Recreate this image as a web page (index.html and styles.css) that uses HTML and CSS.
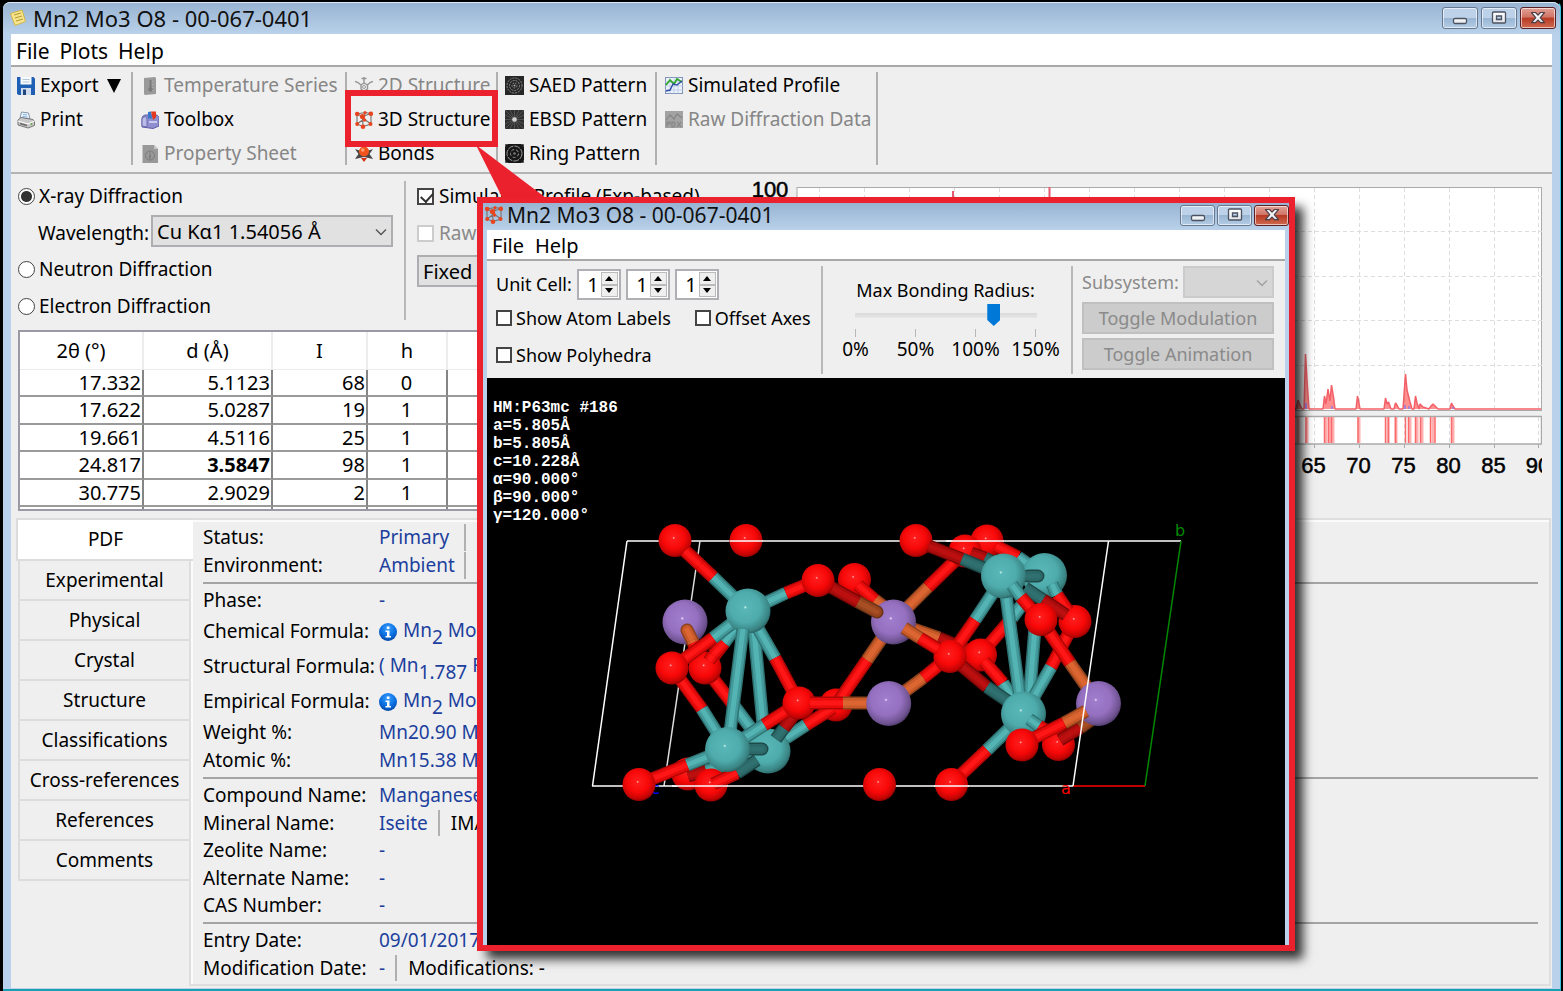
FILE: index.html
```html
<!DOCTYPE html>
<html lang="en">
<head>
<meta charset="utf-8">
<title>Mn2 Mo3 O8 - 00-067-0401</title>
<link rel="stylesheet" href="styles.css">
</head>
<body>
<svg class="defs" aria-hidden="true">
  <defs>
    <linearGradient id="capBlue" x1="0" y1="0" x2="0" y2="1"><stop offset="0" stop-color="#fff"/><stop offset="1" stop-color="#dfe3ea"/></linearGradient>
    <radialGradient id="gO" cx=".46" cy=".42" r=".6"><stop offset="0" stop-color="#ffc0c0"/><stop offset=".07" stop-color="#ff1c1c"/><stop offset=".55" stop-color="#f80808"/><stop offset=".85" stop-color="#c40404"/><stop offset="1" stop-color="#800"/></radialGradient>
    <radialGradient id="gMo" cx=".44" cy=".42" r=".62"><stop offset="0" stop-color="#d8f4f2"/><stop offset=".06" stop-color="#58b6b6"/><stop offset=".55" stop-color="#4eacac"/><stop offset=".85" stop-color="#3a8484"/><stop offset="1" stop-color="#245858"/></radialGradient>
    <radialGradient id="gMn" cx=".44" cy=".42" r=".62"><stop offset="0" stop-color="#f2e8ff"/><stop offset=".06" stop-color="#a07ccc"/><stop offset=".55" stop-color="#9570c0"/><stop offset=".85" stop-color="#6e5290"/><stop offset="1" stop-color="#463460"/></radialGradient>
    <radialGradient id="gInfo" cx=".5" cy=".3" r=".7"><stop offset="0" stop-color="#3aa0ff"/><stop offset=".6" stop-color="#0a6fe0"/><stop offset="1" stop-color="#0648a8"/></radialGradient>
    <symbol id="i-min" viewBox="0 0 16 14"><rect x="1.5" y="7.500" width="13" height="5" rx="1.500" fill="url(#capBlue)" stroke="#4c5260" stroke-width="1.300"/></symbol>
    <symbol id="i-max" viewBox="0 0 16 14"><path fill-rule="evenodd" d="M2.500 1h11a1 1 0 0 1 1 1v9a1 1 0 0 1-1 1h-11a1 1 0 0 1-1-1V2a1 1 0 0 1 1-1zM5.500 5v3.500h5V5z" fill="url(#capBlue)" stroke="#4c5260" stroke-width="1.300"/></symbol>
    <symbol id="i-close" viewBox="0 0 16 14"><path d="M1.500 1.500h4L8 4.200l2.500-2.700h4L10.300 6.700l4.200 5h-4L8 9.100l-2.500 2.600h-4l4.200-5z" fill="url(#capBlue)" stroke="#4c4048" stroke-width="1.200" stroke-linejoin="round"/></symbol>
    <symbol id="i-note" viewBox="0 0 18 18"><path d="M1.500 4.500 13 1l1 3 2.500 8.500L6 16.500z" fill="#f6e58a" stroke="#d2b44a" stroke-width="1"/><path d="M5 6l7-2M6 9l7-2M7 12l7-2" stroke="#b79a3c" stroke-width="1.200"/></symbol>
    <symbol id="i-save" viewBox="0 0 18 18"><path d="M0 0h16.500L18 1.500V18H1.500L0 16.500z" fill="#1f5fb4"/><rect x="3.500" y="0" width="11" height="7.500" fill="#f6f9fd"/><path d="M5.500 2.500h7M5.500 5h7" stroke="#b8c6dc"/><rect x="4" y="11" width="10" height="7" fill="#cfdced"/><rect x="6" y="12.500" width="3" height="5.500" fill="#23467c"/></symbol>
    <symbol id="i-print" viewBox="0 0 18 18"><path d="M3 7 4.500 1l7 1 1.500 6z" fill="#eef6ff" stroke="#8696a8"/><path d="M6 3.500l4 .5M5.500 5.500l5 .7" stroke="#79aee0"/><path d="M1 9l3-2.500 12 2 1.500 2v4L11 17 1 14z" fill="#c9c9c9" stroke="#777"/><path d="M1 10l10 3 6.500-3" fill="none" stroke="#fff"/><path d="M3 12.500l7 2" stroke="#666" stroke-width="1.500"/><circle cx="14.500" cy="13" r="1" fill="#5da83b"/></symbol>
    <symbol id="i-temp" viewBox="0 0 18 18"><path d="M3 1l11-1 1 1v16l-11 1-1-1z" fill="#9a9a9a"/><path d="M9.500 3v8" stroke="#7b7b7b" stroke-width="2"/><circle cx="9.500" cy="12.500" r="2.200" fill="#7b7b7b"/><path d="M12 4v10" stroke="#b4b4b4" stroke-dasharray="1 2"/></symbol>
    <symbol id="i-tool" viewBox="0 0 18 18"><path d="M1 8c0-3 2-4 4-4h10c2 0 3 2 3 4v7l-6 2.500L1 16z" fill="#8f8fd0" stroke="#5d5da5"/><path d="M1 8c1-3 5-3 5 0v8l-5-1z" fill="#bcbce8" stroke="#6a6ab0"/><path d="M7 1l3-.5 1 7H7z" fill="#3776c8"/><path d="M10 .5h5v6l-3 2.500-1-4z" fill="#e23a20"/><path d="M8 11h8" stroke="#dedef8" stroke-width="1.500"/></symbol>
    <symbol id="i-sheet" viewBox="0 0 18 18"><path d="M1.500 0h11.500l4 4v14H1.500z" fill="#999"/><path d="M13 0v4h4" fill="#c6c6c6"/><circle cx="9" cy="10.500" r="4.500" fill="none" stroke="#7a7a7a"/><path d="M9 9.500v4M9 7.500v1" stroke="#777" stroke-width="1.600"/></symbol>
    <symbol id="i-2d" viewBox="0 0 18 18"><path d="M6 8l3-2 3.500 2v4L9 14l-3-2zM0 4.500l3 1L6 8M12.500 8 15 5.500l3-1M9 6V0M6.500 1.500h5" fill="none" stroke="#949494" stroke-width="1.400"/><circle cx="9" cy="10" r="1.500" fill="none" stroke="#999"/></symbol>
    <symbol id="i-3d" viewBox="0 0 18 18"><path d="M2 3 7.500 5.500 16 2.500M2 3v10l6 2.500L16 13V2.500M7.500 5.500 8 15.500M2 3l8-1.500 6 1M2 13l7-5 7 5M10 1.500 9 8" fill="none" stroke="#77706e" stroke-width="1.100"/><g fill="#e84420"><circle cx="2.200" cy="3" r="2.300"/><circle cx="15.800" cy="2.800" r="2.300"/><circle cx="10" cy="1.700" r="1.600"/><circle cx="7.500" cy="5.500" r="2.600"/><circle cx="9.500" cy="9" r="1.800"/><circle cx="2.200" cy="13" r="2"/><circle cx="15.500" cy="13" r="2"/><circle cx="8" cy="15.700" r="2.300"/></g></symbol>
    <symbol id="i-bond" viewBox="0 0 18 18"><path d="M0 4l9 3 9-3-3.500 5L18 14l-9-2-9 2 3.500-5z" fill="#4b4646"/><circle cx="9" cy="6.500" r="5" fill="#f0541c"/><circle cx="7.800" cy="5" r="1.800" fill="#ffa070"/><path d="M6 13h6l-3 4z" fill="#d23014"/></symbol>
    <symbol id="i-saed" viewBox="0 0 19 19"><rect width="19" height="19" fill="#262626"/><g fill="none" stroke="#8c8c8c" stroke-width="1" stroke-dasharray="2 1"><circle cx="9.500" cy="9.500" r="7.500"/><circle cx="9.500" cy="9.500" r="5"/><circle cx="9.500" cy="9.500" r="2.500"/></g><circle cx="9.500" cy="9.500" r="1" fill="#aaa"/></symbol>
    <symbol id="i-ebsd" viewBox="0 0 19 19"><rect width="19" height="19" fill="#303030"/><path d="M0 0l19 19M19 0 0 19M9.500 0v19M0 9.500h19M0 5l19 9M19 5 0 14M5 0l9 19M14 0 5 19" stroke="#686868" stroke-width=".6"/><circle cx="9.500" cy="9.500" r="2.300" fill="#d4d4d4"/></symbol>
    <symbol id="i-ring" viewBox="0 0 19 19"><rect width="19" height="19" fill="#171717"/><g fill="none" stroke="#9a9a9a"><circle cx="9.500" cy="9.500" r="7.500" stroke-dasharray="6 1"/><circle cx="9.500" cy="9.500" r="4" stroke-dasharray="3 2"/></g><circle cx="9.500" cy="9.500" r="1.300" fill="#777"/><path d="M0 3V0h3M16 0h3v3M19 16v3h-3M3 19H0v-3" fill="none" stroke="#888"/></symbol>
    <symbol id="i-sim" viewBox="0 0 18 18"><rect x=".5" y=".5" width="17" height="16" fill="#eef3fb" stroke="#7f93b8"/><path d="M.5 5h17M.5 9h17M.5 13h17M5 .5v16M9 .5v16M13 .5v16" stroke="#c0cfe8"/><path d="M1 8 5 3l4 4 3-5 5 3" fill="none" stroke="#2fa52c" stroke-width="1.800"/><path d="M1 14l4-1 3-6 4 1 5-4" fill="none" stroke="#3450a8" stroke-width="1.500"/></symbol>
    <symbol id="i-raw" viewBox="0 0 18 18"><rect x="0" y="0" width="18" height="17" fill="#a2a2a2"/><path d="M1 9l4-5 4 4 3-5 5 4M2 16v-5h3v2H2M7 16v-5h2l1 2-1 3zM12 11l4 5M16 11l-4 5" fill="none" stroke="#858585" stroke-width="1.200"/></symbol>
    <symbol id="i-info" viewBox="0 0 18 18"><circle cx="9" cy="9" r="9" fill="url(#gInfo)"/><path d="M6.500 7.500h4V13H12v1.500H6.500V13H8V9H6.500zM7.800 3.500h2.700V6H7.800z" fill="#fff"/></symbol>
    <symbol id="i-chev" viewBox="0 0 12 8"><path d="M1 1.500l5 5 5-5" fill="none" stroke="currentColor" stroke-width="1.400"/></symbol>
    <symbol id="i-up" viewBox="0 0 8 5"><path d="M0 5l4-5 4 5z"/></symbol>
    <symbol id="i-down" viewBox="0 0 8 5"><path d="M0 0l4 5 4-5z"/></symbol>
  </defs>
</svg>

<main class="window">
  <header class="titlebar">
    <svg class="ico"><use href="#i-note"/></svg>
    <h1 class="caption">Mn2 Mo3 O8 - 00-067-0401</h1>
    <div class="winbtns">
      <button class="winbtn" aria-label="Minimize"><svg><use href="#i-min"/></svg></button>
      <button class="winbtn" aria-label="Maximize"><svg><use href="#i-max"/></svg></button>
      <button class="winbtn close" aria-label="Close"><svg><use href="#i-close"/></svg></button>
    </div>
  </header>
  <div class="client">
    <nav class="menubar"><button>File</button><button>Plots</button><button>Help</button></nav>

    <div class="toolbar">
      <div class="tgroup g1">
        <button><svg class="ico"><use href="#i-save"/></svg>Export <svg class="tri" viewBox="0 0 14 14"><path d="M0 0h14L7 14z"/></svg></button>
        <button><svg class="ico"><use href="#i-print"/></svg>Print</button>
      </div>
      <div class="tgroup g2">
        <button disabled><svg class="ico"><use href="#i-temp"/></svg>Temperature Series</button>
        <button><svg class="ico"><use href="#i-tool"/></svg>Toolbox</button>
        <button disabled><svg class="ico"><use href="#i-sheet"/></svg>Property Sheet</button>
      </div>
      <div class="tgroup g3">
        <button disabled><svg class="ico"><use href="#i-2d"/></svg>2D Structure</button>
        <button><svg class="ico"><use href="#i-3d"/></svg>3D Structure</button>
        <button><svg class="ico"><use href="#i-bond"/></svg>Bonds</button>
      </div>
      <div class="tgroup g4">
        <button><svg class="ico big"><use href="#i-saed"/></svg>SAED Pattern</button>
        <button><svg class="ico big"><use href="#i-ebsd"/></svg>EBSD Pattern</button>
        <button><svg class="ico big"><use href="#i-ring"/></svg>Ring Pattern</button>
      </div>
      <div class="tgroup g5">
        <button><svg class="ico"><use href="#i-sim"/></svg>Simulated Profile</button>
        <button disabled><svg class="ico"><use href="#i-raw"/></svg>Raw Diffraction Data</button>
      </div>
    </div>

    <section class="upper">
      <div class="controls">
        <div class="settings">
          <div class="source">
            <label class="opt"><input type="radio" name="src" checked>X-ray Diffraction</label>
            <div class="wave">
              <label for="wl">Wavelength:</label>
              <span class="combo"><select id="wl"><option>Cu Kα1 1.54056 Å</option></select><svg><use href="#i-chev"/></svg></span>
            </div>
            <label class="opt"><input type="radio" name="src">Neutron Diffraction</label>
            <label class="opt"><input type="radio" name="src">Electron Diffraction</label>
          </div>
          <div class="profile">
            <label class="opt"><input type="checkbox" checked>Simulated Profile (Exp-based)</label>
            <label class="opt off"><input type="checkbox" disabled>Raw</label>
            <span class="combo"><select aria-label="Slit type"><option>Fixed Slit</option></select><svg><use href="#i-chev"/></svg></span>
          </div>
        </div>
        <div class="peaks">
          <table>
            <thead><tr><th class="c1">2θ (°)</th><th class="c2">d (Å)</th><th class="c3">I</th><th class="c4">h</th><th class="c4">k</th><th>l</th></tr></thead>
            <tbody>
              <tr><td>17.332</td><td>5.1123</td><td>68</td><td class="mid">0</td><td></td><td></td></tr>
              <tr><td>17.622</td><td>5.0287</td><td>19</td><td class="mid">1</td><td></td><td></td></tr>
              <tr><td>19.661</td><td>4.5116</td><td>25</td><td class="mid">1</td><td></td><td></td></tr>
              <tr><td>24.817</td><td><b>3.5847</b></td><td>98</td><td class="mid">1</td><td></td><td></td></tr>
              <tr><td>30.775</td><td>2.9029</td><td>2</td><td class="mid">1</td><td></td><td></td></tr>
              <tr><td></td><td></td><td></td><td></td><td></td><td></td></tr>
            </tbody>
          </table>
        </div>
      </div>
      <svg class="chart" viewBox="745 180 797 306">
        <rect x="797" y="188.500" width="744.500" height="223" fill="#fff" stroke="#aaa"/>
        <g stroke="#ddd" stroke-dasharray="4 3"><path d="M819.500 189v222M864.500 189v222M909.500 189v222M954.500 189v222M999.500 189v222M1044.500 189v222M1089.500 189v222M1134.500 189v222M1179.500 189v222M1224.500 189v222M1269.500 189v222M1314.500 189v222M1359.500 189v222M1404.500 189v222M1449.500 189v222M1494.500 189v222M1538.500 189v222M797 232.500h745M797 277.500h745M797 321.500h745M797 366.500h745"/></g>
        <rect x="797" y="417.500" width="744.500" height="27.500" fill="#fff" stroke="#aaa" stroke-width="1.500"/>
        <g stroke="#ddd" stroke-dasharray="4 3"><path d="M1314.500 418v27M1359.500 418v27M1404.500 418v27M1449.500 418v27M1494.500 418v27M1538.500 418v27"/></g>
        <path d="M1314.500 445v4M1359.500 445v4M1404.500 445v4M1449.500 445v4M1494.500 445v4M1538.500 445v4" stroke="#aaa"/>
        <path d="M953 411V192M1049.500 411V188" stroke="#e85a70" stroke-width="2"/>
        <path d="M797 410H1296L1298 401 1300 406 1302 410H1304L1305.500 355 1307 381 1309 410H1323L1324.500 397 1326 405 1328 390 1330 402 1331.500 386 1333.500 398 1335 410H1356L1357.500 397 1359 404 1360 410H1384L1385.500 399 1387 405 1388.500 403 1391 410H1394L1395.500 404 1397 406 1399 410H1403L1405.500 375 1407 391 1408.500 397 1410 403 1412 410H1414L1415.500 397 1417 404 1419 410 1420 405 1423 408 1429 410 1431 407 1433 405 1436 408 1438 410H1450L1451.500 404 1453 407 1455 410H1541" fill="rgba(255,70,70,.6)" stroke="#f26068" stroke-width="1.500" stroke-linejoin="bevel"/>
        <path d="M1306 410v-6M1332 410v-3M1405 410v-4M1409 410v-3M1453 410v-2" stroke="#8c7cf0" stroke-width="1.500"/>
        <path d="M1298 418v26M1307 418v26M1326 418v26M1330 418v26M1333 418v26M1359 418v26M1388 418v26M1396 418v26M1410 418v26M1417 418v26M1422 418v26M1433 418v26M1453 418v26" stroke="#ffb0b0" stroke-width="3"/>
        <path d="M1306 418v26M1324.500 418v26M1328.500 418v26M1331.500 418v26M1358 418v26M1385.500 418v26M1388.500 418v26M1395.500 418v26M1405.500 418v26M1408.500 418v26M1415.500 418v26M1420.500 418v26M1430.500 418v26M1435 418v26M1451.500 418v26" stroke="#fb6a6a" stroke-width="1.500"/>
        <g class="ticks">
          <text x="770" y="198">100</text>
          <text x="1313.500" y="474">65</text><text x="1358.500" y="474">70</text><text x="1403.500" y="474">75</text><text x="1448.500" y="474">80</text><text x="1493.500" y="474">85</text><text x="1538" y="474">90</text>
        </g>
      </svg>
    </section>

    <section class="lower">
      <div class="tabs" role="tablist">
        <button role="tab" class="on" aria-selected="true">PDF</button>
        <button role="tab">Experimental</button>
        <button role="tab">Physical</button>
        <button role="tab">Crystal</button>
        <button role="tab">Structure</button>
        <button role="tab">Classifications</button>
        <button role="tab">Cross-references</button>
        <button role="tab">References</button>
        <button role="tab">Comments</button>
      </div>
      <div class="details">
        <dl class="block">
          <div><dt>Status:</dt><dd class="w1">Primary</dd></div>
          <div><dt>Environment:</dt><dd class="w1">Ambient</dd></div>
        </dl>
        <dl class="block">
          <div><dt>Phase:</dt><dd>-</dd></div>
          <div class="tall"><dt>Chemical Formula:</dt><dd><svg class="ico"><use href="#i-info"/></svg><span>Mn<sub>2</sub> Mo<sub>3</sub> O<sub>8</sub></span></dd></div>
          <div class="tall"><dt>Structural Formula:</dt><dd><span>( Mn<sub>1.787</sub> Fe</span></dd></div>
          <div class="tall"><dt>Empirical Formula:</dt><dd><svg class="ico"><use href="#i-info"/></svg><span>Mn<sub>2</sub> Mo<sub>3</sub> O<sub>8</sub></span></dd></div>
          <div><dt>Weight %:</dt><dd>Mn20.90 Mo</dd></div>
          <div><dt>Atomic %:</dt><dd>Mn15.38 Mo</dd></div>
        </dl>
        <dl class="block">
          <div><dt>Compound Name:</dt><dd>Manganese</dd></div>
          <div><dt>Mineral Name:</dt><dd>Iseite<span class="more">IMA</span></dd></div>
          <div><dt>Zeolite Name:</dt><dd>-</dd></div>
          <div><dt>Alternate Name:</dt><dd>-</dd></div>
          <div><dt>CAS Number:</dt><dd>-</dd></div>
        </dl>
        <dl class="block">
          <div><dt>Entry Date:</dt><dd>09/01/2017</dd></div>
          <div><dt>Modification Date:</dt><dd>-<span class="more">Modifications: -</span></dd></div>
        </dl>
      </div>
    </section>
  </div>
</main>

<div class="marker"></div>
<svg class="pointer" viewBox="0 0 80 56"><path d="M0 0 74 56H28z"/></svg>

<section class="dialog">
  <header class="titlebar">
    <svg class="ico"><use href="#i-3d"/></svg>
    <h2 class="caption">Mn2 Mo3 O8 - 00-067-0401</h2>
    <div class="winbtns">
      <button class="winbtn" aria-label="Minimize"><svg><use href="#i-min"/></svg></button>
      <button class="winbtn" aria-label="Maximize"><svg><use href="#i-max"/></svg></button>
      <button class="winbtn close" aria-label="Close"><svg><use href="#i-close"/></svg></button>
    </div>
  </header>
  <div class="dclient">
    <nav class="menubar"><button>File</button><button>Help</button></nav>
    <div class="dtools">
      <div class="cell">
        <div class="units">
          <span>Unit Cell:</span>
          <span class="spin"><input type="number" value="1" aria-label="Cells along a"><span class="arrows"><button aria-label="More"><svg><use href="#i-up"/></svg></button><button aria-label="Less"><svg><use href="#i-down"/></svg></button></span></span>
          <span class="spin"><input type="number" value="1" aria-label="Cells along b"><span class="arrows"><button aria-label="More"><svg><use href="#i-up"/></svg></button><button aria-label="Less"><svg><use href="#i-down"/></svg></button></span></span>
          <span class="spin"><input type="number" value="1" aria-label="Cells along c"><span class="arrows"><button aria-label="More"><svg><use href="#i-up"/></svg></button><button aria-label="Less"><svg><use href="#i-down"/></svg></button></span></span>
        </div>
        <div class="checks">
          <label class="opt"><input type="checkbox">Show Atom Labels</label>
          <label class="opt"><input type="checkbox">Offset Axes</label>
          <label class="opt"><input type="checkbox">Show Polyhedra</label>
        </div>
      </div>
      <div class="radius">
        <label for="rad">Max Bonding Radius:</label>
        <input id="rad" type="range" min="0" max="150" value="115">
        <div class="marks"><span>0%</span><span>50%</span><span>100%</span><span>150%</span></div>
      </div>
      <div class="modul">
        <div class="sub"><label for="subs">Subsystem:</label><span class="combo"><select id="subs" disabled></select><svg><use href="#i-chev"/></svg></span></div>
        <button class="btn" disabled>Toggle Modulation</button>
        <button class="btn" disabled>Toggle Animation</button>
      </div>
    </div>
    <div class="scene">
      <svg class="model" viewBox="487 378 798 567"></svg>
      <p class="celldata">HM:P63mc #186<br>a=5.805Å<br>b=5.805Å<br>c=10.228Å<br>α=90.000°<br>β=90.000°<br>γ=120.000°</p>
    </div>
  </div>
</section>
<script src="model.js"></script>
</body>
</html>
```
FILE: styles.css
```css
* { box-sizing: border-box; }
body {
  margin: 0;
  background: #000;
  color: #000;
  font: 19px/27px "Noto Sans", "Open Sans", sans-serif;
}
button, input, select { font: inherit; color: inherit; margin: 0; padding: 0; }
button { background: none; border: 0; }
h1, h2, p, dl, dd { margin: 0; }
label, button, span, td, th, dt, dd { white-space: nowrap; }
.defs { position: absolute; width: 0; height: 0; }
.ico { width: 18px; height: 18px; flex: none; }
.ico.big { width: 19px; height: 19px; }

.window {
  min-height: 100vh;
  padding: 0 8px 1px;
  margin: 0 2px 0 3px;
  border: solid #3bc4e0;
  border-width: 2px 1px 2px 0;
  border-top-color: #000;
  border-bottom-color: #1a9fb4;
  border-radius: 8px 8px 0 0;
  background: #b9d1ea;
  display: flex;
  flex-direction: column;
}
.titlebar {
  display: flex;
  align-items: center;
  gap: 6px;
  height: 32px;
  margin: 0 -8px;
  padding: 0 4px 1px 6px;
  background: linear-gradient(#98b4d2, #b9d1ea);
  border-radius: 7px 7px 0 0;
  border-top: 1px solid #dbe8f5;
}
.caption { flex: 1; font-size: 22px; line-height: 30px; font-weight: 400; color: #111; }
.winbtns { display: flex; gap: 3px; }
.winbtn {
  width: 36px;
  height: 22px;
  display: flex;
  align-items: center;
  justify-content: center;
  border: 1px solid #66788f;
  border-radius: 3px;
  box-shadow: inset 0 0 0 1px rgba(255,255,255,.6);
  background: linear-gradient(#bdd2e8 0 48%, #98b5d2 50%, #b4cde6);
}
.winbtn svg { width: 16px; height: 14px; }
.winbtn.close { border-color: #5a2024; background: linear-gradient(#e2a196 0, #cf7465 46%, #b83a24 50%, #cf6a50); }

.client { flex: 1; display: flex; flex-direction: column; background: #efefef; }
.menubar {
  display: flex;
  gap: 10px;
  height: 33px;
  padding: 4px 5px 0;
  background: #fff;
  border-bottom: 2px solid #a8a8a8;
  font-size: 21px;
}
.toolbar { display: flex; padding: 5px 0 7px; border-bottom: 2px solid #b4b4b4; height: 107px; }
.tgroup { display: flex; flex-direction: column; padding: 0 0 0 6px; border-right: 2px solid #b0b0b0; }
.tgroup button { display: flex; align-items: center; gap: 5px; height: 27px; margin-bottom: 7px; }
.tgroup button:last-child { margin-bottom: 0; }
.tgroup button:disabled { color: #868686; }
.tri { width: 14px; height: 14px; margin-left: 3px; }
.g1 { flex: 0 0 122px; }
.g2 { flex: 0 0 214px; padding-left: 8px; }
.g3 { flex: 0 0 151px; padding-left: 8px; }
.g4 { flex: 0 0 159px; padding-left: 7px; }
.g5 { flex: 0 0 221px; padding-left: 8px; }

.upper { display: flex; height: 344px; padding: 1px 10px 0 0; }
.controls { flex: 0 0 734px; display: flex; flex-direction: column; padding-left: 7px; }
.settings { display: flex; height: 155px; padding-top: 6px; }
.source { flex: 0 0 388px; height: 139px; border-right: 2px solid #b8b8b8; }
.opt { display: flex; align-items: center; gap: 5px; height: 30px; }
.source .opt { gap: 4px; }
.source .opt, .profile .opt { margin-bottom: 7px; }
.wave { display: flex; align-items: center; justify-content: space-between; height: 30px; margin: 0 11px 6px 20px; }
.source .combo { width: 242px; margin-top: -4px; }
.combo { position: relative; display: block; }
.combo select {
  appearance: none;
  width: 100%;
  height: 32px;
  padding: 0 4px;
  background: #e1e1e1;
  border: 2px solid #adadb2;
  border-radius: 0;
  font-size: 20px;
}
.combo svg { position: absolute; right: 6px; top: 13px; width: 12px; height: 8px; color: #555; }
.profile { padding-left: 11px; width: 330px; }
.off { color: #8a8a8a; }
input[type=radio], input[type=checkbox] {
  appearance: none;
  width: 17px;
  height: 17px;
  flex: none;
  background: #fff;
  border: 2px solid #444;
}
input[type=radio] { border-width: 1px; border-radius: 50%; }
input[type=radio]:checked { background: radial-gradient(circle, #333 0 5px, #fff 6px); }
.profile input:checked { position: relative; }
.profile input:checked::after {
  content: "";
  position: absolute;
  left: 4px;
  top: 0;
  width: 6px;
  height: 10px;
  border: solid #333;
  border-width: 0 2px 2px 0;
  transform: rotate(42deg);
}
input[type=checkbox]:disabled { border-color: #ccc; }

.peaks { height: 181px; overflow: hidden; border: 2px solid #9a9aa4; background: #fff; margin-right: 8px; font-size: 20px; }
.peaks table { width: 100%; table-layout: fixed; border-collapse: separate; border-spacing: 0; }
.peaks th { height: 38px; padding: 0; font-weight: 400; border-right: 2px solid #ececec; border-bottom: 1px solid #ececec; }
.peaks td { height: 27px; line-height: 24px; padding: 0 1px 0 0; text-align: right; border-right: 2px solid #858585; border-bottom: 2px solid #9a9a9a; }
.peaks tr:nth-child(even) td { height: 28px; }
.peaks td.mid { text-align: center; }
.c1 { width: 124px; }
.c2 { width: 129px; }
.c3 { width: 95px; }
.c4 { width: 80px; }
.chart { flex: 1; min-width: 0; height: 306px; margin-top: 4px; }
.ticks { font: 22px "Liberation Sans", sans-serif; text-anchor: middle; stroke: #000; stroke-width: .5px; }

.lower { flex: 1; display: flex; padding: 0 1px 2px 5px; }
.tabs { flex: 0 0 173px; display: flex; flex-direction: column; padding-left: 2px; }
.tabs button { height: 40px; border: solid #dcdcdc; border-width: 0 0 2px 2px; }
.tabs .on { height: 43px; margin: 0 -4px 0 -2px; background: #fff; border-width: 2px 0 2px 2px; position: relative; }
.details { flex: 1; border: 2px solid #dedede; box-shadow: inset 2px 2px 0 #fbfbfb; padding: 4px 11px 0 12px; }
.block { padding-bottom: 3px; margin-bottom: 3px; border-bottom: 2px solid #a4a4a4; }
.block:last-child { border: 0; margin: 0; padding: 0; }
.block div { display: flex; align-items: center; height: 27px; }
.block div:nth-child(even) { height: 28px; }
.block .tall, .block .tall:nth-child(even) { height: 35px; }
dt { flex: 0 0 176px; }
dd { display: flex; align-items: center; gap: 6px; color: #1c3f9e; }
.tall dd { line-height: 32px; }
.tall span { padding-bottom: 4px; }
sub { font-size: 19px; line-height: 10px; vertical-align: -7px; }
.w1 { width: 87px; border-right: 2px solid #b0b0b0; }
.more { color: #000; border-left: 2px solid #b0b0b0; padding-left: 11px; margin-left: 4px; line-height: 26px; }

.marker { position: absolute; left: 345px; top: 90px; width: 153px; height: 57px; border: 6px solid #eb212e; }
.pointer { position: absolute; left: 476px; top: 145px; width: 80px; height: 56px; fill: #eb212e; }

.dialog {
  position: absolute;
  left: 477px;
  top: 197px;
  width: 818px;
  border: 6px solid #eb212e;
  box-shadow: 9px 9px 10px -1px rgba(0,0,0,.8);
  background: #b9d1ea;
  font-size: 18px;
}
.dialog .titlebar { height: 27px; margin: 0; padding: 0 0 3px 2px; gap: 4px; border-radius: 0; border-top: 0; }
.dialog .caption { font-size: 21px; line-height: 24px; }
.dialog .winbtn { width: 35px; height: 21px; }
.dialog .winbtns { gap: 2px; }
.dclient { margin: 0 4px; background: #efefef; }
.dialog .menubar { height: 31px; font-size: 20px; gap: 11px; padding-top: 2px; }
.dtools { display: flex; height: 117px; padding: 5px 0 4px; }
.cell { flex: 0 0 336px; padding-left: 9px; border-right: 2px solid #b8b8b8; }
.units { display: flex; align-items: center; gap: 5px; height: 37px; }
.spin { display: flex; width: 44px; height: 31px; padding: 1px; border: 2px solid #b0b0b4; background: #fff; }
.spin input { width: 20px; min-width: 0; flex: 1; border: 0; text-align: right; padding-right: 2px; appearance: textfield; background: #fff; font-size: 20px; }
.spin input::-webkit-inner-spin-button { display: none; }
.arrows { width: 17px; display: flex; flex-direction: column; }
.arrows button { flex: 1; display: flex; align-items: center; justify-content: center; border: 1px solid #bbb; background: #efefef; }
.arrows svg { width: 8px; height: 5px; }
.checks { display: flex; flex-wrap: wrap; column-gap: 24px; row-gap: 7px; }
.checks .opt { gap: 4px; }
.checks input { width: 16px; height: 16px; }
.radius { flex: 0 0 250px; display: flex; flex-direction: column; align-items: center; padding-top: 11px; border-right: 2px solid #b8b8b8; padding-right: 3px; }
.radius input { appearance: none; width: 194px; height: 22px; background: none; }
.radius input::-webkit-slider-runnable-track { height: 22px; background: linear-gradient(#dadada, #e6e6e6) center 9px / 182px 5px no-repeat; }
.radius input::-webkit-slider-thumb { appearance: none; width: 13px; height: 22px; background: #0078d7; clip-path: polygon(0 0, 100% 0, 100% 73%, 50% 100%, 0 73%); }
.marks { display: grid; grid-template-columns: repeat(4, 60px); padding-top: 3px; line-height: 24px; font-size: 19px; }
.marks span { display: flex; flex-direction: column; align-items: center; }
.marks span::before { content: ""; width: 1px; height: 8px; background: #b8b8b8; }
.modul { flex: 1; padding: 0 11px 0 9px; color: #8a8a8a; display: flex; flex-direction: column; gap: 4px; }
.sub { display: flex; align-items: center; justify-content: space-between; }
.sub .combo { width: 91px; }
.sub select { background: #ccc; border-color: #bcbcc0; }
.sub .combo svg { color: #a0a0a0; }
.btn { height: 32px; background: #ccc; border: 2px solid #c0c0c0; color: #8a8a8a; }
.scene { position: relative; background: #000; }
.model { display: block; width: 100%; height: auto; }
.celldata { position: absolute; left: 6px; top: 21px; color: #fff; font: bold 16px/18px "Liberation Mono", monospace; }
.axis { font: 16px "DejaVu Sans", sans-serif; }
```
FILE: model.js
```js
const NS = "http://www.w3.org/2000/svg";
const view = document.querySelector(".model");

// Shades per element, outer edge to highlight; upper case keys are lit, lower case ones lie in shadow.
const shades = {
  R: ["#b00606", "#e80b0b", "#ff1616"], r: ["#7c0606", "#a80c0c", "#bc1010"],
  T: ["#2f7474", "#449a9a", "#54b4b4"], t: ["#1e4a4a", "#2c6868", "#307070"],
  B: ["#8e421c", "#c85a2a", "#dc6632"], b: ["#6a3214", "#96441e", "#a84e24"]
};
const atoms = { O: ["gO", 16.5], Mo: ["gMo", 22.5], Mn: ["gMn", 22.5] };

function add(name, attrs, text) {
  const el = document.createElementNS(NS, name);
  for (const key in attrs) el.setAttribute(key, attrs[key]);
  if (text) el.textContent = text;
  view.append(el);
}
function line(x1, y1, x2, y2, stroke, width = 1.5, cap = "butt") {
  add("line", { x1, y1, x2, y2, stroke, "stroke-width": width, "stroke-linecap": cap });
}
function rod(x1, y1, x2, y2, kind, cap) {
  [13, 10, 5].forEach((w, i) => line(x1, y1, x2, y2, shades[kind][i], w, cap));
}
function bond(x1, y1, k1, mx, my, k2, x2, y2) {
  rod(x1, y1, mx, my, k1);
  rod(mx, my, x2, y2, k2);
}
function atom(kind, cx, cy) {
  const [fill, r] = atoms[kind];
  add("circle", { cx, cy, r, fill: `url(#${fill})` });
}

// Cell edges behind the atoms
line(627, 541, 1181, 541, "#fff");
line(627, 541, 592.5, 786, "#fff");
line(700, 541, 664, 786, "#ddd");
line(592, 786, 1073, 786, "#fff");
line(1073, 786, 1145, 786, "#f00");
line(1181, 541, 1145, 786, "#080");
add("text", { x: 651, y: 794, fill: "#00f", class: "axis" }, "c");

// Left half, back to front
atom("O", 688, 774);
atom("Mn", 685, 622);
rod(687, 630, 693, 642, "B", "round");
bond(692, 640, "B", 693, 643, "R", 705, 668);
rod(754, 630, 764, 735, "T");
bond(748, 611, "T", 724, 643, "R", 705, 668);
bond(705, 668, "R", 735, 707, "T", 768, 751);
atom("O", 705, 668);
bond(724, 643, "R", 713, 655, "R", 709, 661);
bond(768, 751, "T", 706, 771, "r", 688, 776);
atom("Mo", 768, 751);
atom("O", 711, 785);
bond(757, 760, "t", 737, 773, "R", 713, 784);
atom("O", 836, 705);
bond(786, 738, "T", 806, 725, "R", 833, 708);
bond(776, 739, "t", 784, 728, "r", 799, 708);
rod(748, 749, 762, 749, "t", "round");
bond(748, 611, "T", 713, 638, "R", 672, 668);
bond(672, 668, "R", 702, 709, "T", 727, 749);
bond(675, 541, "R", 713, 577, "T", 748, 611);
atom("O", 675, 540.5);
bond(685, 551, "R", 700, 565, "R", 713, 577);
atom("O", 672, 668);
bond(748, 611, "T", 775, 658, "R", 799, 703);
bond(748, 611, "T", 786, 593, "R", 818, 580);
atom("Mo", 748, 611);
rod(743, 629, 729, 740, "T");
bond(799, 703, "R", 764, 725, "T", 727, 749);
bond(727, 749, "T", 687, 765, "R", 639, 784);
atom("Mo", 727.5, 749.5);
atom("O", 639, 784.5);
atom("O", 746, 540.5);
atom("O", 879.5, 784.5);

// Centre
bond(836, 705, "R", 867, 660, "B", 893, 622);
bond(893, 622, "B", 928, 587, "R", 965, 551);
bond(893, 622, "B", 939, 638, "r", 980, 655);
bond(854, 580, "R", 873, 600, "B", 893, 617);
atom("O", 854.5, 579.5);
bond(858, 585, "R", 875, 600, "B", 893, 614);
atom("Mn", 893.5, 622);
rod(858, 602, 877, 612, "b", "round");
rod(818, 580, 858, 602, "r");
atom("O", 818, 580.5);
bond(950, 656, "R", 923, 678, "B", 889, 703);
atom("O", 799, 703);
bond(810, 703, "R", 843, 703, "B", 889, 703);
atom("Mn", 888.7, 703.5);

// Right half, back to front
atom("O", 987, 541);
atom("O", 965, 551);
bond(996, 546, "R", 1018, 557, "T", 1044, 575);
bond(971, 553, "r", 985, 558, "t", 1004, 568);
bond(1044, 575, "T", 1012, 618, "R", 980, 655);
rod(1036, 615, 1028, 714, "T");
bond(1075, 621, "R", 1051, 667, "T", 1024, 714);
atom("O", 980.5, 655);
bond(984, 661, "R", 1003, 683, "T", 1023, 714);
bond(950, 656, "r", 987, 687, "t", 1015, 706);
atom("Mo", 1044.5, 575.5);
bond(1025, 588, "t", 1043, 600, "r", 1068, 616);
atom("O", 1075, 621.5);
bond(1052, 584, "T", 1057, 595, "R", 1068, 611);
bond(1043, 600, "r", 1054, 607, "r", 1066, 615);
rod(1028, 576, 1038, 576, "t", "round");
bond(1004, 576, "T", 975, 620, "R", 950, 656);
rod(1004, 580, 1021, 706, "T");
atom("O", 916, 540.5);
bond(929, 546, "r", 962, 559, "t", 1003, 576);
atom("O", 950, 656.5);
bond(904, 628, "B", 920, 638, "R", 938, 649);
atom("Mo", 1003.5, 576);
bond(1012, 585, "T", 1021, 597, "R", 1038, 617);
bond(1041, 620, "R", 1070, 663, "B", 1098, 703);
atom("O", 1041, 619.5);
bond(1024, 714, "T", 987, 750, "R", 951, 784);
atom("Mo", 1023.5, 714);
atom("O", 1058.5, 744.5);
bond(1029, 719, "T", 1039, 726, "R", 1050, 733);
bond(1098, 715, "b", 1080, 728, "r", 1060, 740);
atom("Mn", 1098.5, 703.5);
bond(1086, 711, "B", 1064, 723, "R", 1024, 743);
atom("O", 1022, 745);
atom("O", 951.5, 784.5);

// Cell edges in front of the atoms
line(730, 541, 763, 541, "#fff");
line(946, 541, 1004, 541, "#fff");
line(1108.5, 541, 1073, 786, "#fff");
line(934, 786, 969, 786, "#fff");
line(672, 786, 728, 786, "#fff");
add("text", { x: 1061, y: 794, fill: "#f00", class: "axis" }, "a");
add("text", { x: 1175, y: 536, fill: "#080", class: "axis" }, "b");
```
